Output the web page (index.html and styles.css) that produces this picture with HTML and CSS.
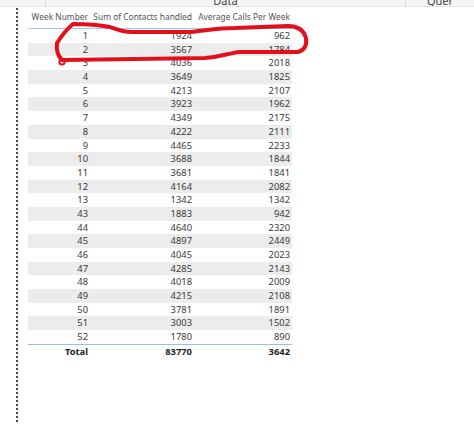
FILE: index.html
```html
<!DOCTYPE html>
<html>
<head>
<meta charset="utf-8">
<link rel="stylesheet" href="styles.css">
</head>
<body>
<div class="ribbon">
  <div class="tab tab-left"></div>
  <div class="tab tab-mid"><span>Data</span></div>
  <div class="tab tab-right"><span>Quer</span></div>
</div>
<div class="canvas">
  <div class="frame">
    <div class="table">
      <div class="row head">
        <div class="c">Week Number</div>
        <div class="c">Sum of Contacts handled</div>
        <div class="c">Average Calls Per Week</div>
      </div>
      <div class="row"><div class="c">1</div><div class="c">1924</div><div class="c">962</div></div>
      <div class="row"><div class="c">2</div><div class="c">3567</div><div class="c">1784</div></div>
      <div class="row"><div class="c">3</div><div class="c">4036</div><div class="c">2018</div></div>
      <div class="row"><div class="c">4</div><div class="c">3649</div><div class="c">1825</div></div>
      <div class="row"><div class="c">5</div><div class="c">4213</div><div class="c">2107</div></div>
      <div class="row"><div class="c">6</div><div class="c">3923</div><div class="c">1962</div></div>
      <div class="row"><div class="c">7</div><div class="c">4349</div><div class="c">2175</div></div>
      <div class="row"><div class="c">8</div><div class="c">4222</div><div class="c">2111</div></div>
      <div class="row"><div class="c">9</div><div class="c">4465</div><div class="c">2233</div></div>
      <div class="row"><div class="c">10</div><div class="c">3688</div><div class="c">1844</div></div>
      <div class="row"><div class="c">11</div><div class="c">3681</div><div class="c">1841</div></div>
      <div class="row"><div class="c">12</div><div class="c">4164</div><div class="c">2082</div></div>
      <div class="row"><div class="c">13</div><div class="c">1342</div><div class="c">1342</div></div>
      <div class="row"><div class="c">43</div><div class="c">1883</div><div class="c">942</div></div>
      <div class="row"><div class="c">44</div><div class="c">4640</div><div class="c">2320</div></div>
      <div class="row"><div class="c">45</div><div class="c">4897</div><div class="c">2449</div></div>
      <div class="row"><div class="c">46</div><div class="c">4045</div><div class="c">2023</div></div>
      <div class="row"><div class="c">47</div><div class="c">4285</div><div class="c">2143</div></div>
      <div class="row"><div class="c">48</div><div class="c">4018</div><div class="c">2009</div></div>
      <div class="row"><div class="c">49</div><div class="c">4215</div><div class="c">2108</div></div>
      <div class="row"><div class="c">50</div><div class="c">3781</div><div class="c">1891</div></div>
      <div class="row"><div class="c">51</div><div class="c">3003</div><div class="c">1502</div></div>
      <div class="row"><div class="c">52</div><div class="c">1780</div><div class="c">890</div></div>
      <div class="row total"><div class="c">Total</div><div class="c">83770</div><div class="c">3642</div></div>
    </div>
  </div>
</div>
<svg class="ink" width="474" height="424" viewBox="0 0 474 424">
  <path d="M62 60 C58 56 56 50 57 43 C62 35 67 29 73 24 C85 24 100 25 110 27 C118 30 122 32 132 32 L190 32 C205 31 215 28 235 28 L288 26 C298 26 304 31 306 38 C307 45 305 50 298 52 L240 52 C228 53 222 57 205 58 L62 60"
        fill="none" stroke="#e3101c" stroke-width="4" stroke-linejoin="round" stroke-linecap="round"/>
  <circle cx="62" cy="62" r="2.6" fill="none" stroke="#e3101c" stroke-width="2"/>
</svg>
</body>
</html>
```

FILE: styles.css
```css
html, body {
  margin: 0;
  padding: 0;
  background: #ffffff;
}
body {
  width: 474px;
  height: 424px;
  overflow: hidden;
  position: relative;
  font-family: "Noto Sans", "Open Sans", sans-serif;
  color: #3a3a3a;
}
.ribbon {
  display: flex;
  height: 6px;
  background: #f4f4f4;
  border-bottom: 1px solid #e4e4e4;
  overflow: hidden;
}
.tab {
  height: 6px;
  overflow: hidden;
  font-size: 11px;
  line-height: 11px;
  color: #444;
  text-align: center;
}
.tab span {
  display: block;
  margin-top: -5px;
}
.tab-left {
  width: 45px;
  border-right: 1px solid #d8d8d8;
}
.tab-mid {
  width: 359px;
  border-right: 1px solid #d8d8d8;
}
.tab-right {
  flex: 1;
}
.canvas {
  padding-left: 16px;
  padding-top: 1px;
}
.frame {
  border-left: 2px dotted #4a4a4a;
  height: 418px;
  padding-left: 10px;
}
.table {
  width: 264px;
  font-size: 9.4px;
}
.row {
  display: grid;
  grid-template-columns: 62px 104px 98px;
  height: 13.7px;
  line-height: 13.7px;
}
.row:nth-child(odd) {
  background: #ececec;
}
.row.head {
  background: transparent;
  height: 20px;
  line-height: 18px;
  font-size: 8.4px;
  color: #555555;
  border-bottom: 1px solid #9cc9ec;
  white-space: nowrap;
}
.c {
  text-align: right;
  padding-right: 2px;
  white-space: nowrap;
}
.row.total {
  background: transparent;
  border-top: 1px solid #8ec3ea;
  font-weight: bold;
  color: #222;
}
.ink {
  position: absolute;
  left: 0;
  top: 0;
  pointer-events: none;
}
```
